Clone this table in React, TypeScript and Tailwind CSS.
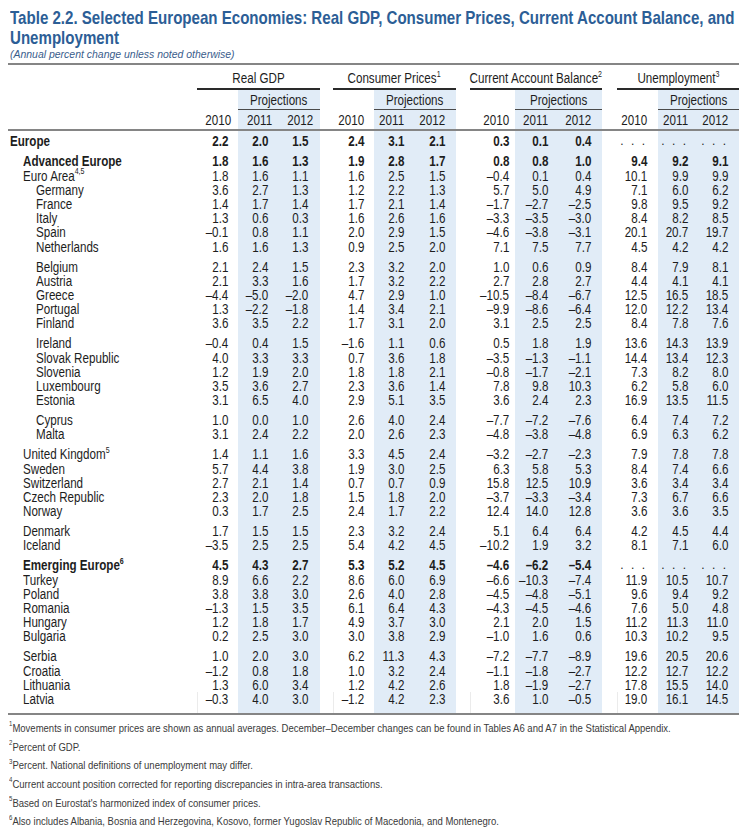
import React from "react";

// column layout shared by every table row
const GRID =
  "grid grid-cols-[189px_41px_41px_41px_13px_41px_41px_41px_14px_45px_43px_44px_15px_41px_40px_41px]";

const BAND = "bg-[#e1ecf7]";

// the source type is a condensed face; Arial metrics squeezed give the same look
const NARROW = "inline-block scale-x-[0.83]";

// per-column classes for body cells (label, 4 groups of 3 with spacers between)
const COLS = [
  "",
  "flex justify-end pr-[10px]",
  "flex justify-end pr-[11px] bg-[#e1ecf7]",
  "flex justify-end pr-[12px] bg-[#e1ecf7]",
  "",
  "flex justify-end pr-[10px]",
  "flex justify-end pr-[11px] bg-[#e1ecf7]",
  "flex justify-end pr-[11px] bg-[#e1ecf7]",
  "",
  "flex justify-end pr-[6px]",
  "flex justify-end pr-[10px] bg-[#e1ecf7]",
  "flex justify-end pr-[11px] bg-[#e1ecf7]",
  "",
  "flex justify-end pr-[11px]",
  "flex justify-end pr-[10px] bg-[#e1ecf7]",
  "flex justify-end pr-[11px] bg-[#e1ecf7]",
];

const GROUP_START = [1, 5, 9, 13];

type Row = {
  label: string;
  sup?: string;
  indent: 0 | 1 | 2;
  bold?: boolean;
  first?: boolean;
  v: string;
};

const ROWS: Row[] = [
  { label: "Europe", indent: 0, bold: true, v: "2.2 2.0 1.5 2.4 3.1 2.1 0.3 0.1 0.4 . . ." },
  { label: "Advanced Europe", indent: 1, bold: true, first: true, v: "1.8 1.6 1.3 1.9 2.8 1.7 0.8 0.8 1.0 9.4 9.2 9.1" },
  { label: "Euro Area", sup: "4,5", indent: 1, v: "1.8 1.6 1.1 1.6 2.5 1.5 -0.4 0.1 0.4 10.1 9.9 9.9" },
  { label: "Germany", indent: 2, v: "3.6 2.7 1.3 1.2 2.2 1.3 5.7 5.0 4.9 7.1 6.0 6.2" },
  { label: "France", indent: 2, v: "1.4 1.7 1.4 1.7 2.1 1.4 -1.7 -2.7 -2.5 9.8 9.5 9.2" },
  { label: "Italy", indent: 2, v: "1.3 0.6 0.3 1.6 2.6 1.6 -3.3 -3.5 -3.0 8.4 8.2 8.5" },
  { label: "Spain", indent: 2, v: "-0.1 0.8 1.1 2.0 2.9 1.5 -4.6 -3.8 -3.1 20.1 20.7 19.7" },
  { label: "Netherlands", indent: 2, v: "1.6 1.6 1.3 0.9 2.5 2.0 7.1 7.5 7.7 4.5 4.2 4.2" },
  { label: "Belgium", indent: 2, first: true, v: "2.1 2.4 1.5 2.3 3.2 2.0 1.0 0.6 0.9 8.4 7.9 8.1" },
  { label: "Austria", indent: 2, v: "2.1 3.3 1.6 1.7 3.2 2.2 2.7 2.8 2.7 4.4 4.1 4.1" },
  { label: "Greece", indent: 2, v: "-4.4 -5.0 -2.0 4.7 2.9 1.0 -10.5 -8.4 -6.7 12.5 16.5 18.5" },
  { label: "Portugal", indent: 2, v: "1.3 -2.2 -1.8 1.4 3.4 2.1 -9.9 -8.6 -6.4 12.0 12.2 13.4" },
  { label: "Finland", indent: 2, v: "3.6 3.5 2.2 1.7 3.1 2.0 3.1 2.5 2.5 8.4 7.8 7.6" },
  { label: "Ireland", indent: 2, first: true, v: "-0.4 0.4 1.5 -1.6 1.1 0.6 0.5 1.8 1.9 13.6 14.3 13.9" },
  { label: "Slovak Republic", indent: 2, v: "4.0 3.3 3.3 0.7 3.6 1.8 -3.5 -1.3 -1.1 14.4 13.4 12.3" },
  { label: "Slovenia", indent: 2, v: "1.2 1.9 2.0 1.8 1.8 2.1 -0.8 -1.7 -2.1 7.3 8.2 8.0" },
  { label: "Luxembourg", indent: 2, v: "3.5 3.6 2.7 2.3 3.6 1.4 7.8 9.8 10.3 6.2 5.8 6.0" },
  { label: "Estonia", indent: 2, v: "3.1 6.5 4.0 2.9 5.1 3.5 3.6 2.4 2.3 16.9 13.5 11.5" },
  { label: "Cyprus", indent: 2, first: true, v: "1.0 0.0 1.0 2.6 4.0 2.4 -7.7 -7.2 -7.6 6.4 7.4 7.2" },
  { label: "Malta", indent: 2, v: "3.1 2.4 2.2 2.0 2.6 2.3 -4.8 -3.8 -4.8 6.9 6.3 6.2" },
  { label: "United Kingdom", sup: "5", indent: 1, first: true, v: "1.4 1.1 1.6 3.3 4.5 2.4 -3.2 -2.7 -2.3 7.9 7.8 7.8" },
  { label: "Sweden", indent: 1, v: "5.7 4.4 3.8 1.9 3.0 2.5 6.3 5.8 5.3 8.4 7.4 6.6" },
  { label: "Switzerland", indent: 1, v: "2.7 2.1 1.4 0.7 0.7 0.9 15.8 12.5 10.9 3.6 3.4 3.4" },
  { label: "Czech Republic", indent: 1, v: "2.3 2.0 1.8 1.5 1.8 2.0 -3.7 -3.3 -3.4 7.3 6.7 6.6" },
  { label: "Norway", indent: 1, v: "0.3 1.7 2.5 2.4 1.7 2.2 12.4 14.0 12.8 3.6 3.6 3.5" },
  { label: "Denmark", indent: 1, first: true, v: "1.7 1.5 1.5 2.3 3.2 2.4 5.1 6.4 6.4 4.2 4.5 4.4" },
  { label: "Iceland", indent: 1, v: "-3.5 2.5 2.5 5.4 4.2 4.5 -10.2 1.9 3.2 8.1 7.1 6.0" },
  { label: "Emerging Europe", sup: "6", indent: 1, bold: true, first: true, v: "4.5 4.3 2.7 5.3 5.2 4.5 -4.6 -6.2 -5.4 . . ." },
  { label: "Turkey", indent: 1, v: "8.9 6.6 2.2 8.6 6.0 6.9 -6.6 -10.3 -7.4 11.9 10.5 10.7" },
  { label: "Poland", indent: 1, v: "3.8 3.8 3.0 2.6 4.0 2.8 -4.5 -4.8 -5.1 9.6 9.4 9.2" },
  { label: "Romania", indent: 1, v: "-1.3 1.5 3.5 6.1 6.4 4.3 -4.3 -4.5 -4.6 7.6 5.0 4.8" },
  { label: "Hungary", indent: 1, v: "1.2 1.8 1.7 4.9 3.7 3.0 2.1 2.0 1.5 11.2 11.3 11.0" },
  { label: "Bulgaria", indent: 1, v: "0.2 2.5 3.0 3.0 3.8 2.9 -1.0 1.6 0.6 10.3 10.2 9.5" },
  { label: "Serbia", indent: 1, first: true, v: "1.0 2.0 3.0 6.2 11.3 4.3 -7.2 -7.7 -8.9 19.6 20.5 20.6" },
  { label: "Croatia", indent: 1, v: "-1.2 0.8 1.8 1.0 3.2 2.4 -1.1 -1.8 -2.7 12.2 12.7 12.2" },
  { label: "Lithuania", indent: 1, v: "1.3 6.0 3.4 1.2 4.2 2.6 1.8 -1.9 -2.7 17.8 15.5 14.0" },
  { label: "Latvia", indent: 1, v: "-0.3 4.0 3.0 -1.2 4.2 2.3 3.6 1.0 -0.5 19.0 16.1 14.5" },
];

const NOTES: [string, string][] = [
  ["1", "Movements in consumer prices are shown as annual averages. December–December changes can be found in Tables A6 and A7 in the Statistical Appendix."],
  ["2", "Percent of GDP."],
  ["3", "Percent. National definitions of unemployment may differ."],
  ["4", "Current account position corrected for reporting discrepancies in intra-area transactions."],
  ["5", "Based on Eurostat's harmonized index of consumer prices."],
  ["6", "Also includes Albania, Bosnia and Herzegovina, Kosovo, former Yugoslav Republic of Macedonia, and Montenegro."],
];

// spread the 12 numbers over the 16 grid columns
function cellsFor(v: string): string[] {
  const nums = v.includes(". . .")
    ? [...v.replace(" . . .", "").split(" "), "dots", "dots", "dots"]
    : v.split(" ");
  const out = [""];
  nums.forEach((n, i) => {
    if (i > 0 && i % 3 === 0) out.push("");
    out.push(n === "dots" ? ". . ." : n.replace(/-/g, "–"));
  });
  return out;
}

function Sup({ n }: { n: string }) {
  return <sup className="text-[8.5px] top-[-0.75em]">{n}</sup>;
}

function BodyRow({ row, last }: { row: Row; last: boolean }) {
  const cells = cellsFor(row.v);
  const pad = row.first ? "pt-[5.8px]" : "";
  const indent = row.indent === 0 ? "pl-[2px]" : row.indent === 1 ? "pl-[15px]" : "pl-[28px]";
  return (
    <div className={GRID + (row.bold ? " font-bold" : "")}>
      {cells.map((c, i) => (
        <div
          key={i}
          className={
            "leading-[14.2px] whitespace-nowrap " +
            COLS[i] +
            " " +
            pad +
            (i === 0 ? " " + indent : "") +
            (last && GROUP_START.includes(i) ? " border-l border-[#ebebeb]" : "")
          }
        >
          {i === 0 ? (
            <span className={NARROW + " origin-left"}>
              {row.label}
              {row.sup && <Sup n={row.sup} />}
            </span>
          ) : c === ". . ." ? (
            <span className="inline-block text-[12px] tracking-[2px] font-normal">. . .</span>
          ) : c ? (
            <span className={NARROW + " origin-right"}>{c}</span>
          ) : null}
        </div>
      ))}
    </div>
  );
}

export default function App() {
  const head = "col-span-3 border-b-2 border-[#2a2a2a] flex justify-center leading-4 pt-[5px] whitespace-nowrap";
  const proj = "col-span-2 border-b border-[#4a4a4a] flex justify-center leading-4 pt-[2px] " + BAND;
  return (
    <div className="bg-white w-[747px] h-[830px] overflow-hidden text-[#1d1d1d] font-[family-name:'Liberation_Sans',Arial,sans-serif]">
      <div className="ml-[8px] w-[731px]">
        <h1 className="pt-[8.4px] pl-[2px] text-[18.5px] leading-[20px] font-bold text-[#2c5e96] whitespace-nowrap">
          <span className="inline-block scale-x-[0.815] origin-left">
            Table 2.2. Selected European Economies: Real GDP, Consumer Prices, Current Account Balance, and
          </span>
          <br />
          <span className="inline-block scale-x-[0.815] origin-left">Unemployment</span>
        </h1>
        <p className="pl-[2px] text-[11.5px] leading-[12px] italic text-[#3a5d8c] whitespace-nowrap">
          <span className="inline-block scale-x-[0.91] origin-left">(Annual percent change unless noted otherwise)</span>
        </p>
        <div className="mt-[3px] h-[2px] bg-[#858585]" />

        {/* group headings */}
        <div className={GRID + " h-[24.5px] text-[14px]"}>
          <div />
          <div className={head}>
            <span className={NARROW}>Real GDP</span>
          </div>
          <div />
          <div className={head}>
            <span className={NARROW}>
              Consumer Prices<Sup n="1" />
            </span>
          </div>
          <div />
          <div className={head}>
            <span className={NARROW}>
              Current Account Balance<Sup n="2" />
            </span>
          </div>
          <div />
          <div className={head}>
            <span className={NARROW}>
              Unemployment<Sup n="3" />
            </span>
          </div>
        </div>

        {/* projections */}
        <div className={GRID + " h-[20px] text-[14px]"}>
          <div />
          <div />
          <div className={proj}>
            <span className={NARROW}>Projections</span>
          </div>
          <div />
          <div />
          <div className={proj}>
            <span className={NARROW}>Projections</span>
          </div>
          <div />
          <div />
          <div className={proj}>
            <span className={NARROW}>Projections</span>
          </div>
          <div />
          <div />
          <div className={proj}>
            <span className={NARROW}>Projections</span>
          </div>
        </div>

        {/* years */}
        <div className={GRID + " h-[19.5px] text-[14px]"}>
          {["", "2010", "2011", "2012", "", "2010", "2011", "2012", "", "2010", "2011", "2012", "", "2010", "2011", "2012"].map(
            (y, i) => (
              <div key={i} className={"leading-4 pt-[2px] " + COLS[i] + (i >= 1 && i <= 3 ? " !pr-[7px]" : "")}>
                {y && <span className={NARROW + " origin-right"}>{y}</span>}
              </div>
            )
          )}
        </div>
        <div className="h-[2px] bg-[#858585]" />

        {/* body */}
        <div className="text-[14px]">
          <div className={GRID + " h-[3px]"}>
            {COLS.map((c, i) => (
              <div key={i} className={c} />
            ))}
          </div>
          {ROWS.map((r, i) => (
            <BodyRow key={r.label} row={r} last={i === ROWS.length - 1} />
          ))}
          <div className={GRID + " h-[7px]"}>
            {COLS.map((c, i) => (
              <div key={i} className={c + (GROUP_START.includes(i) ? " border-l border-[#ebebeb]" : "")} />
            ))}
          </div>
        </div>
        <div className="h-[2px] bg-[#858585]" />

        {/* footnotes */}
        <div className="pt-[3.6px] pl-[1px] text-[11px] leading-[18.7px] text-[#3a3a3a]">
          {NOTES.map(([n, t]) => (
            <p key={n} className="whitespace-nowrap">
              <span className="inline-block scale-x-[0.865] origin-left">
                <sup className="text-[7px] top-[-0.8em]">{n}</sup>
                {t}
              </span>
            </p>
          ))}
        </div>
      </div>
    </div>
  );
}
